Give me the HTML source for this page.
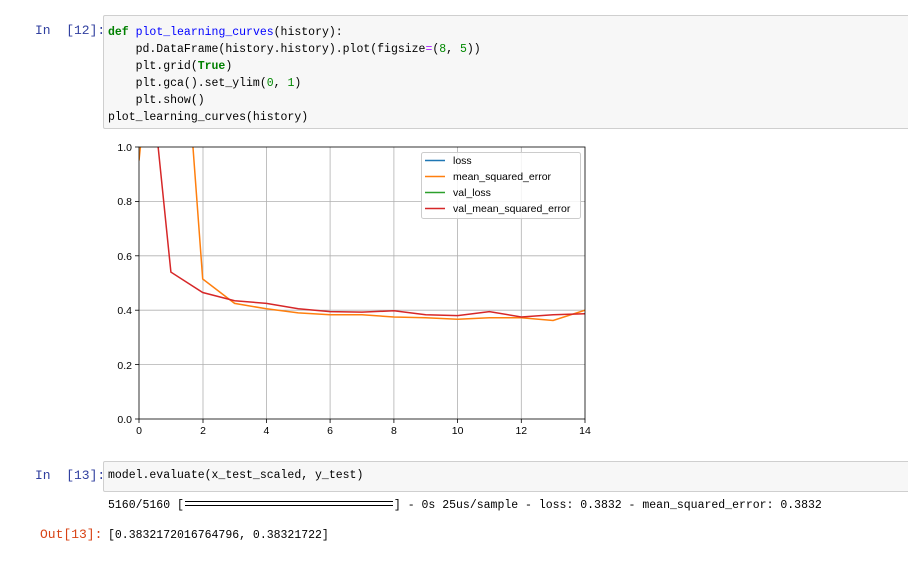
<!DOCTYPE html>
<html><head><meta charset="utf-8"><style>
body{margin:0;width:908px;height:562px;background:#fff;position:relative;overflow:hidden;font-family:"Liberation Mono",monospace;}
.p{position:absolute;font-size:13px;color:#303F9F;white-space:pre;}
.box{position:absolute;left:103px;right:-2px;background:#f7f7f7;border:1px solid #cfcfcf;border-radius:2px;}
.code{position:absolute;font-size:11.5px;line-height:17px;white-space:pre;color:#000;}
.k{color:#008000;font-weight:bold}.n{color:#080}.f{color:#00f}.o{color:#a2f}
.bar{display:inline-block;width:208px;height:3px;border-top:1px solid #000;border-bottom:1px solid #000;vertical-align:middle;margin:0 1px 2px 1px}
svg text{font-family:"Liberation Sans",sans-serif;font-size:10.5px;fill:#000}
</style></head><body>
<div class="p" style="left:35px;top:23px">In  [12]:</div>
<div class="box" style="top:15px;height:112px"></div>
<div class="code" style="left:108px;top:24px"><span class="k">def</span> <span class="f">plot_learning_curves</span>(history):
    pd.DataFrame(history.history).plot(figsize<span class="o">=</span>(<span class="n">8</span>, <span class="n">5</span>))
    plt.grid(<span class="k">True</span>)
    plt.gca().set_ylim(<span class="n">0</span>, <span class="n">1</span>)
    plt.show()
plot_learning_curves(history)</div>
<svg width="908" height="450" style="position:absolute;left:0;top:0">
<defs><clipPath id="c"><rect x="139" y="147" width="446" height="272"/></clipPath></defs>
<g stroke="#b0b0b0" stroke-width="0.8">
<line x1="203" y1="147" x2="203" y2="419"/><line x1="266.4" y1="147" x2="266.4" y2="419"/><line x1="330.1" y1="147" x2="330.1" y2="419"/><line x1="393.9" y1="147" x2="393.9" y2="419"/><line x1="457.6" y1="147" x2="457.6" y2="419"/><line x1="521.3" y1="147" x2="521.3" y2="419"/>
<line x1="139" y1="201.4" x2="585" y2="201.4"/><line x1="139" y1="255.8" x2="585" y2="255.8"/><line x1="139" y1="310.2" x2="585" y2="310.2"/><line x1="139" y1="364.6" x2="585" y2="364.6"/>
</g>
<g clip-path="url(#c)" fill="none" stroke-width="1.5">
<polyline stroke="#ff7f0e" points="139,160.6 170.9,-152 202.7,279 234.6,303.4 266.4,308.8 298.3,312.9 330.1,314.8 362,314.8 393.9,317 425.7,317.8 457.6,319.2 489.4,317.8 521.3,317.8 553.1,320.5 585,310.2"/>
<polyline stroke="#d62728" points="139,-40.7 170.9,272.1 202.7,292.5 234.6,300.7 266.4,303.4 298.3,308.8 330.1,311.6 362,312.1 393.9,310.8 425.7,314.8 457.6,315.6 489.4,311.6 521.3,317 553.1,314.8 585,313.7"/>
</g>
<rect x="139" y="147" width="446" height="272" fill="none" stroke="#000" stroke-width="0.8"/>
<g stroke="#000" stroke-width="0.8">
<line x1="139" y1="419" x2="139" y2="423"/><line x1="203" y1="419" x2="203" y2="423"/><line x1="266.4" y1="419" x2="266.4" y2="423"/><line x1="330.1" y1="419" x2="330.1" y2="423"/><line x1="393.9" y1="419" x2="393.9" y2="423"/><line x1="457.6" y1="419" x2="457.6" y2="423"/><line x1="521.3" y1="419" x2="521.3" y2="423"/><line x1="585" y1="419" x2="585" y2="423"/>
<line x1="135" y1="147" x2="139" y2="147"/><line x1="135" y1="201.4" x2="139" y2="201.4"/><line x1="135" y1="255.8" x2="139" y2="255.8"/><line x1="135" y1="310.2" x2="139" y2="310.2"/><line x1="135" y1="364.6" x2="139" y2="364.6"/><line x1="135" y1="419" x2="139" y2="419"/>
</g>
<g text-anchor="middle"><text x="139" y="434">0</text><text x="203" y="434">2</text><text x="266.4" y="434">4</text><text x="330.1" y="434">6</text><text x="393.9" y="434">8</text><text x="457.6" y="434">10</text><text x="521.3" y="434">12</text><text x="585" y="434">14</text></g>
<g text-anchor="end"><text x="132" y="151">1.0</text><text x="132" y="205">0.8</text><text x="132" y="260">0.6</text><text x="132" y="314">0.4</text><text x="132" y="369">0.2</text><text x="132" y="423">0.0</text></g>
<rect x="421.5" y="152.5" width="159" height="66" rx="2" fill="#fff" fill-opacity="0.85" stroke="#ccc"/>
<g stroke-width="1.5"><line x1="425" y1="160.5" x2="445" y2="160.5" stroke="#1f77b4"/><line x1="425" y1="176.5" x2="445" y2="176.5" stroke="#ff7f0e"/><line x1="425" y1="192.5" x2="445" y2="192.5" stroke="#2ca02c"/><line x1="425" y1="208.5" x2="445" y2="208.5" stroke="#d62728"/></g>
<text x="453" y="164">loss</text><text x="453" y="180">mean_squared_error</text><text x="453" y="196">val_loss</text><text x="453" y="212">val_mean_squared_error</text>
</svg>
<div class="p" style="left:35px;top:468px">In  [13]:</div>
<div class="box" style="top:461px;height:29px"></div>
<div class="code" style="left:108px;top:467px">model.evaluate(x_test_scaled, y_test)</div>
<div class="code" style="left:108px;top:497px">5160/5160 [<span class="bar"></span>] - 0s 25us/sample - loss: 0.3832 - mean_squared_error: 0.3832</div>
<div class="p" style="left:40px;top:527px;color:#D84315">Out[13]:</div>
<div class="code" style="left:108px;top:527px">[0.3832172016764796, 0.38321722]</div>
</body></html>
